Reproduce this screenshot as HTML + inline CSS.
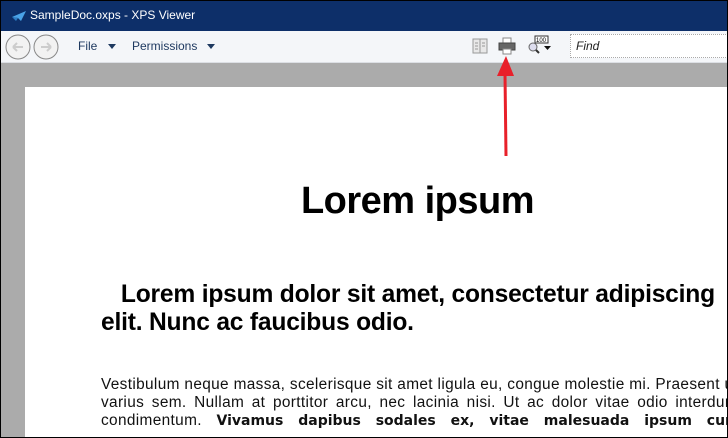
<!DOCTYPE html>
<html><head><style>
html,body{margin:0;padding:0}
body{width:728px;height:438px;overflow:hidden;position:relative;background:#ababab;font-family:"Liberation Sans",sans-serif}
.title{position:absolute;left:0;top:0;width:728px;height:31px;background:#0d2f69;color:#fff;font-size:12px}
.title span{position:absolute;left:30px;top:8px}
.tb{position:absolute;left:0;top:31px;width:728px;height:31px;background:#f4f6f9;border-bottom:1px solid #dcdfe4}
.menu{position:absolute;top:8px;font-size:12px;color:#1e3960}
.tri{position:absolute;top:13px;width:0;height:0;border-left:4px solid transparent;border-right:4px solid transparent;border-top:5px solid #1e3960}
.find{position:absolute;left:570px;top:3px;width:156px;height:22px;border:1px dotted #aaa;background:#fff;font-style:italic;font-size:12px;color:#222}
.page{position:absolute;left:25px;top:87px;width:703px;height:351px;background:#fff}
.h1{position:absolute;left:0;width:835px;text-align:center;top:180px;font-weight:bold;font-size:38px;letter-spacing:-0.5px}
.h2{position:absolute;left:101px;top:281px;font-weight:bold;font-size:24.6px;line-height:28px;white-space:nowrap;letter-spacing:-0.2px}
.clip{position:absolute;left:0;top:0;width:727px;height:438px;overflow:hidden}
.p{position:absolute;left:101px;top:376px;font-size:15.4px;letter-spacing:0.35px;line-height:18px;color:#111;white-space:nowrap}
.p div{height:18px}
.p b{font-family:"DejaVu Sans",sans-serif;font-size:14px;letter-spacing:0}
.frame{position:absolute;left:0;top:0;width:726px;height:436px;border:1px solid #000;pointer-events:none}
</style></head><body>
<div class="title">
<svg style="position:absolute;left:11px;top:10px" width="16" height="12"><path d="M1 7 L15 1 L10 11 L7 8 Z" fill="#4aa3e8"/><path d="M1 7 L7 8 L5 11Z" fill="#2d7cc4"/></svg>
<span>SampleDoc.oxps - XPS Viewer</span></div>
<div class="tb">
<svg style="position:absolute;left:4px;top:2px" width="56" height="28"><circle cx="14" cy="14" r="12" fill="#f2f2f2" stroke="#888"/><circle cx="42" cy="14" r="12" fill="#f2f2f2" stroke="#888"/><path d="M9 14h10M9 14l4-4M9 14l4 4M37 14h10M47 14l-4-4M47 14l-4 4" stroke="#ccc" stroke-width="2" fill="none"/></svg>
<span class="menu" style="left:78px">File</span><span class="tri" style="left:108px"></span>
<span class="menu" style="left:132px">Permissions</span><span class="tri" style="left:207px"></span>
<svg style="position:absolute;left:472px;top:7px" width="16" height="16"><rect x="1" y="1" width="14" height="14" fill="#e8e8e8" stroke="#999"/><path d="M8 1v14M3 5h3M3 8h3M3 11h3M10 5h3M10 8h3" stroke="#999"/></svg>
<svg style="position:absolute;left:498px;top:6px" width="18" height="18"><rect x="5" y="1" width="8" height="5" fill="#fff" stroke="#888"/><rect x="1" y="6" width="16" height="7" fill="#666" stroke="#444"/><rect x="5" y="12" width="8" height="5" fill="#fff" stroke="#888"/></svg>
<svg style="position:absolute;left:527px;top:4px" width="30" height="22"><rect x="8" y="1" width="13" height="7" fill="#fff" stroke="#333"/><text x="9" y="7" font-size="6" font-family="Liberation Sans">100</text><circle cx="6" cy="12" r="4" fill="#dde" stroke="#666"/><path d="M9 15l3 3" stroke="#333" stroke-width="2"/><path d="M17 11h7l-3.5 4z" fill="#111"/></svg>
<div class="find"><span style="position:absolute;left:5px;top:4px">Find</span></div>
</div>
<div class="page"></div>
<div class="clip">
<div class="h1">Lorem ipsum</div>
<div class="h2">&nbsp;&nbsp;&nbsp;Lorem ipsum dolor sit amet, consectetur adipiscing<br>elit. Nunc ac faucibus odio.</div>
<div class="p">
<div>Vestibulum neque massa, scelerisque sit amet ligula eu, congue molestie mi. Praesent ut</div>
<div style="word-spacing:3px">varius sem. Nullam at porttitor arcu, nec lacinia nisi. Ut ac dolor vitae odio interdum</div>
<div style="word-spacing:10px">condimentum. <b>Vivamus dapibus sodales ex, vitae malesuada ipsum cursus</b></div>
</div>
</div>
<svg style="position:absolute;left:494px;top:52px" width="24" height="106"><path d="M12 104 L11 22" stroke="#e8202a" stroke-width="3" fill="none"/><path d="M3 24 L12 4 L20 24 Z" fill="#e8202a"/></svg>
<div class="frame"></div>
</body></html>
